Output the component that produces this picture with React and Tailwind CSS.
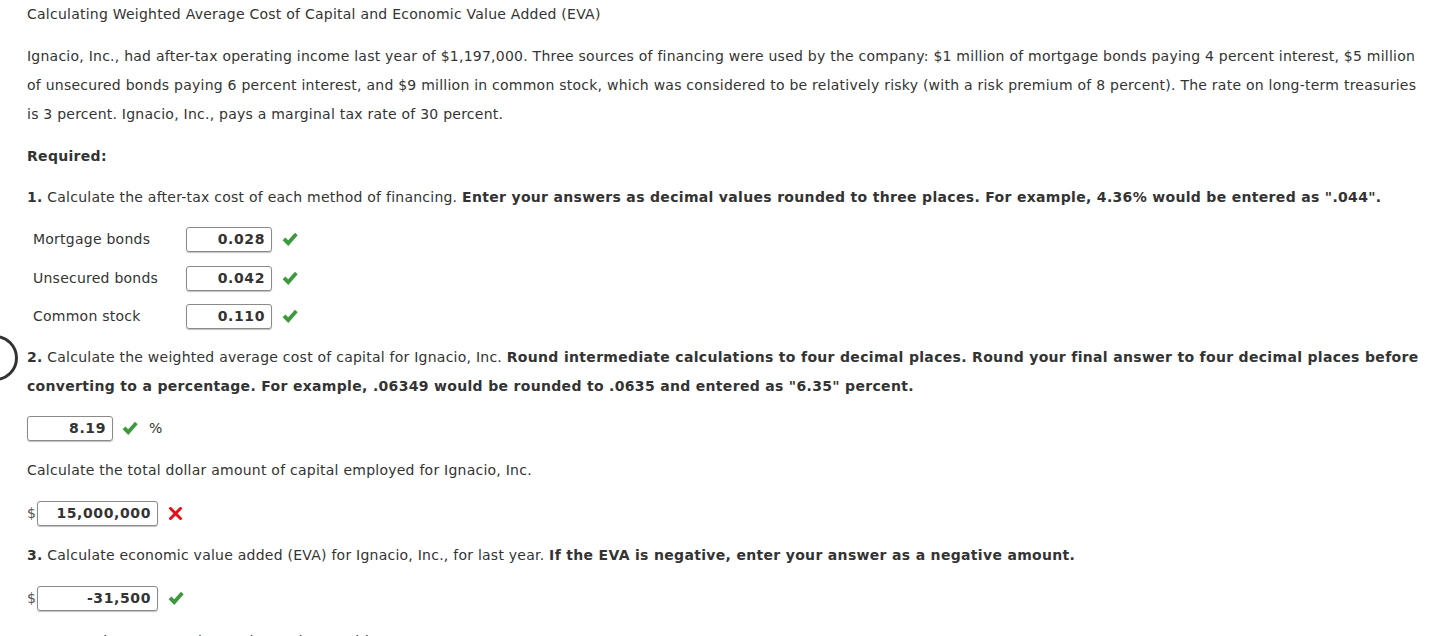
import React from "react";

const font = { fontFamily: '"DejaVu Sans", Verdana, sans-serif' };

function Check() {
  return (
    <svg width="16" height="15" viewBox="0 0 15 14" className="shrink-0">
      <path d="M0.6 7.6 L3.2 5.1 L5.8 7.8 L12.2 0.6 L14.7 3.0 L5.9 13.0 Z" fill="#3c9a3c" />
    </svg>
  );
}

function Cross() {
  return (
    <svg width="13" height="13" viewBox="0 0 13 13" className="shrink-0">
      <path d="M1.5 1.5 L11.5 11.5 M11.5 1.5 L1.5 11.5" stroke="#e5101a" strokeWidth="3" strokeLinecap="square" />
    </svg>
  );
}

function Box({ value, w = "w-[86px]" }) {
  return (
    <div className={`${w} h-[25px] border border-[#8a8a8a] rounded-[3px] shadow-[0_1px_1px_rgba(0,0,0,0.25)] flex items-center justify-end pr-[6px] font-bold text-[14px] tracking-[0.6px] text-[#333]`}>
      {value}
    </div>
  );
}

function Row({ label, value }) {
  return (
    <div className="h-[38.5px] flex items-center">
      <div className="w-[159px] pl-[6px]">{label}</div>
      <Box value={value} />
      <div className="ml-[10px]"><Check /></div>
    </div>
  );
}

export default function App() {
  return (
    <div style={font} className="relative w-[1443px] h-[636px] overflow-hidden bg-white text-[#333] text-[14px] tracking-[0.24px]">
      <div className="absolute left-[-28px] top-[335px] w-[46px] h-[46px] rounded-full border-[3px] border-[#333]" />
      <div className="pl-[27px] pr-[12px]">
        <div className="pt-[4px] leading-[20px]">
          Calculating Weighted Average Cost of Capital and Economic Value Added (EVA)
        </div>
        <p className="mt-[17.5px] leading-[29px]">
          Ignacio, Inc., had after-tax operating income last year of $1,197,000. Three sources of financing were used by the company: $1 million of mortgage bonds paying 4 percent interest, $5 million of unsecured bonds paying 6 percent interest, and $9 million in common stock, which was considered to be relatively risky (with a risk premium of 8 percent). The rate on long-term treasuries is 3 percent. Ignacio, Inc., pays a marginal tax rate of 30 percent.
        </p>
        <div className="mt-[13.5px] leading-[29px] font-bold tracking-[0.3px]">Required:</div>
        <div className="mt-[12px] leading-[29px]">
          <span className="font-bold">1.</span> Calculate the after-tax cost of each method of financing.{" "}
          <span className="font-bold tracking-[0.32px]">Enter your answers as decimal values rounded to three places. For example, 4.36% would be entered as ".044".</span>
        </div>
        <div className="mt-[8.5px]">
          <Row label="Mortgage bonds" value="0.028" />
          <Row label="Unsecured bonds" value="0.042" />
          <Row label="Common stock" value="0.110" />
        </div>
        <div className="mt-[7px] leading-[29px]">
          <span className="font-bold">2.</span> Calculate the weighted average cost of capital for Ignacio, Inc.{" "}
          <span className="font-bold tracking-[0.32px]">Round intermediate calculations to four decimal places. Round your final answer to four decimal places before converting to a percentage. For example, .06349 would be rounded to .0635 and entered as "6.35" percent.</span>
        </div>
        <div className="mt-[14.5px] h-[25px] flex items-center">
          <Box value="8.19" />
          <div className="ml-[9px]"><Check /></div>
          <span className="ml-[11px]">%</span>
        </div>
        <div className="mt-[15.5px] leading-[29px]">
          Calculate the total dollar amount of capital employed for Ignacio, Inc.
        </div>
        <div className="mt-[15.5px] h-[25px] flex items-center">
          <span className="w-[10px] text-[#555]">$</span>
          <Box value="15,000,000" w="w-[121px]" />
          <div className="ml-[11px]"><Cross /></div>
        </div>
        <div className="mt-[15.5px] leading-[29px]">
          <span className="font-bold">3.</span> Calculate economic value added (EVA) for Ignacio, Inc., for last year.{" "}
          <span className="font-bold tracking-[0.32px]">If the EVA is negative, enter your answer as a negative amount.</span>
        </div>
        <div className="mt-[16px] h-[25px] flex items-center">
          <span className="w-[10px] text-[#555]">$</span>
          <Box value="-31,500" w="w-[121px]" />
          <div className="ml-[10px]"><Check /></div>
        </div>
        <div className="mt-[16px] leading-[29px]">
          <span className="font-bold">4.</span> Is Ignacio, Inc., creating or destroying wealth?
        </div>
      </div>
    </div>
  );
}
